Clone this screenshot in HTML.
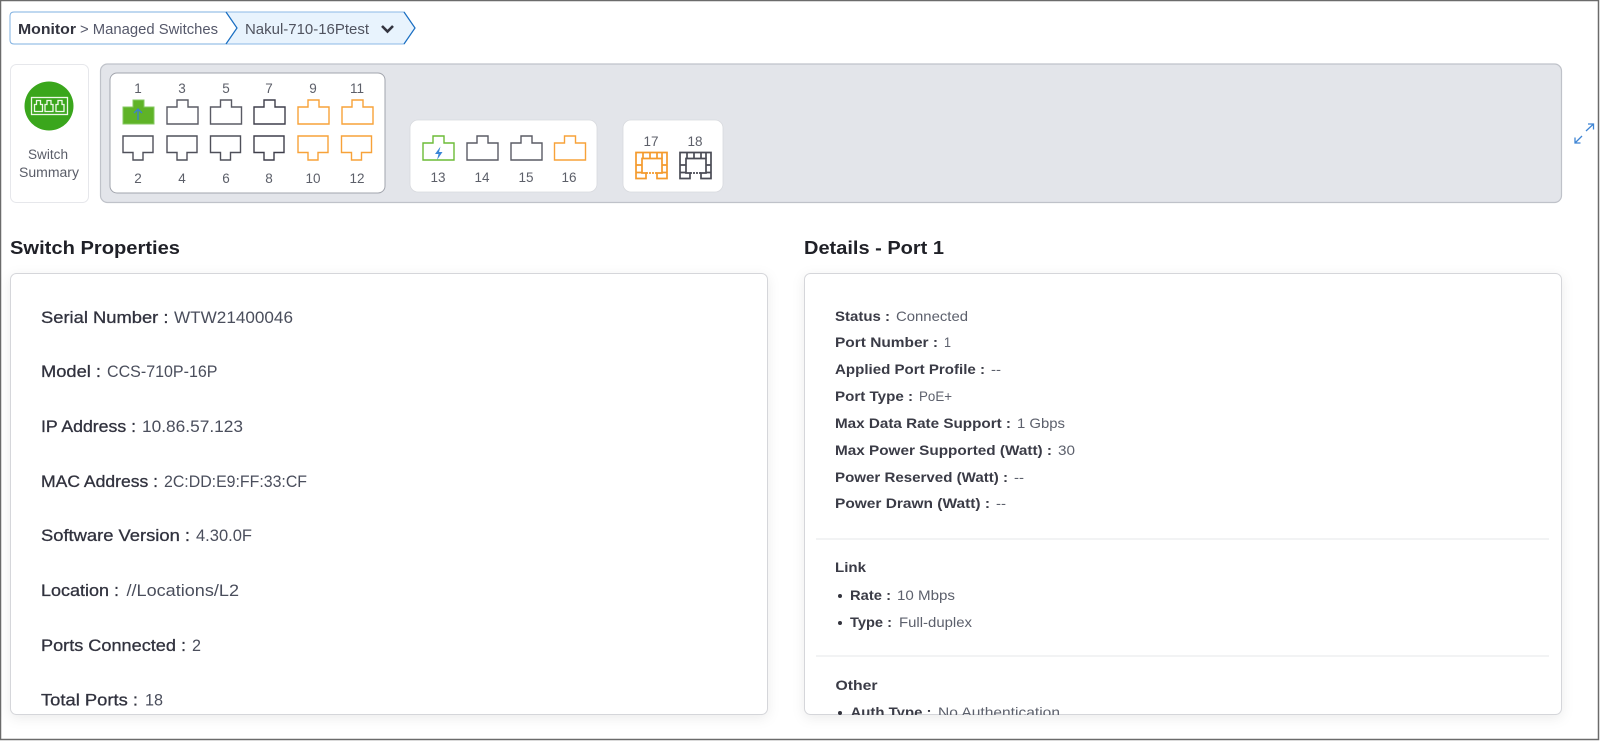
<!DOCTYPE html>
<html><head><meta charset="utf-8"><title>Managed Switches</title>
<style>
html,body{margin:0;padding:0;background:#fff;width:1600px;height:741px;overflow:hidden}
svg{display:block}
text{font-family:"Liberation Sans",sans-serif}
.l{font-size:17px;fill:#31323e;stroke:#31323e;stroke-width:.3px}
.v{font-size:17px;fill:#4a4e5c}
.b{font-size:14px;font-weight:bold;fill:#3a3b46}
.s{font-size:14px;fill:#5c606c}
.h{font-size:18px;font-weight:bold;fill:#1f2027}
.n{font-size:13.5px;fill:#5c5f69;text-anchor:middle}
.p{fill:none;stroke-width:1.4}
</style></head><body>
<svg width="1600" height="741" viewBox="0 0 1600 741" xmlns="http://www.w3.org/2000/svg">
<defs>
<path id="up" d="M123 124V107H133V100H144V107H154V124Z"/>
<path id="dn" d="M123 136H153V152.500H143V160H133V152.500H123Z"/>
<g id="sfp" fill="none" stroke-width="1.700">
<path d="M636 152.500H667V178.500H657V173H662V158.500H642V173H646V178.500H636Z"/>
<path d="M643 152.500V158.500M650 152.500V158.500M657 152.500V158.500M662 152.500V158.500M636 165H642M636 172.500H642M662 165H667M662 172.500H667"/>
<path d="M646 173H657" stroke-dasharray="2 1"/>
</g>
<clipPath id="cr"><rect x="804" y="274" width="758" height="441"/></clipPath>
</defs>

<rect width="1600" height="741" fill="#fff"/>
<path d="M.5 740V.5H1598.500V739.500H0" fill="none" stroke="#6b6b6b" stroke-width="1.500"/>

<!-- breadcrumb -->
<path d="M226 12H14Q10 12 10 16V40Q10 44 14 44H226L237 28Z" fill="#fff" stroke="#7fb0e0"/>
<path d="M226 12H404L415 28L404 44H226L237 28Z" fill="#e8f3fd" stroke="#8db9e6"/>
<path d="M226 12L237 28L226 44M404 12L415 28L404 44" fill="none" stroke="#1b6fc2" stroke-width="1.200"/>
<text x="18" y="34" font-size="15" font-weight="bold" fill="#33343f" textLength="58" lengthAdjust="spacingAndGlyphs">Monitor</text>
<text x="80" y="34" font-size="15" fill="#55586a" textLength="138" lengthAdjust="spacingAndGlyphs">&gt; Managed Switches</text>
<text x="245" y="34" font-size="15" fill="#50535f" textLength="124" lengthAdjust="spacingAndGlyphs">Nakul-710-16Ptest</text>
<path d="M382 26L387.500 31.500L393 26" fill="none" stroke="#33343f" stroke-width="2.600"/>

<!-- summary -->
<rect x="10.500" y="64.500" width="78" height="138" rx="6" fill="#fff" stroke="#e6e7eb" stroke-width="1"/>
<circle cx="49" cy="106" r="24.500" fill="#3aa61c"/>
<rect x="31.500" y="97.500" width="36" height="17" fill="none" stroke="#eef8e8" stroke-width="1.300"/>
<g fill="none" stroke="#eef8e8" stroke-width="1.300"><path d="M34.500 111.500V104.500H36.500V100.500H40.500V104.500H42.500V111.500Z"/><path d="M45 111.500V104.500H47V100.500H51V104.500H53V111.500Z"/><path d="M56 111.500V104.500H58V100.500H62V104.500H64V111.500Z"/></g>
<text x="28" y="159" font-size="13.500" fill="#5a5d68" textLength="40" lengthAdjust="spacingAndGlyphs">Switch</text>
<text x="19" y="177" font-size="13.500" fill="#5a5d68" textLength="60" lengthAdjust="spacingAndGlyphs">Summary</text>

<!-- gray panel -->
<rect x="100.500" y="64" width="1461" height="138.500" rx="7" fill="#e3e5ea" stroke="#bfc2c9" stroke-width="1.200"/>
<rect x="110" y="73" width="275" height="120" rx="7" fill="#fff" stroke="#a2a5ad" stroke-width="1"/>
<rect x="410" y="120" width="187" height="72" rx="8" fill="#fff" stroke="#d8dade" stroke-width=".8"/>
<rect x="623" y="120" width="100" height="72" rx="8" fill="#fff" stroke="#d8dade" stroke-width=".8"/>

<!-- labels -->
<text class="n" x="138" y="93">1</text><text class="n" x="182" y="93">3</text><text class="n" x="226" y="93">5</text><text class="n" x="269" y="93">7</text><text class="n" x="313" y="93">9</text><text class="n" x="357" y="93">11</text>
<text class="n" x="138" y="183">2</text><text class="n" x="182" y="183">4</text><text class="n" x="226" y="183">6</text><text class="n" x="269" y="183">8</text><text class="n" x="313" y="183">10</text><text class="n" x="357" y="183">12</text>
<text class="n" x="438" y="182">13</text><text class="n" x="482" y="182">14</text><text class="n" x="526" y="182">15</text><text class="n" x="569" y="182">16</text>
<text class="n" x="651" y="146">17</text><text class="n" x="695" y="146">18</text>

<!-- group 1 ports -->
<use href="#up" fill="#5fb327" stroke="#86c860" stroke-width="1"/>
<path d="M138 120V109M134 113L138 109L142 113" fill="none" stroke="#3b7fd0" stroke-width="1.300"/>
<g class="p" stroke="#5a5b65"><use href="#up" x="44"/><use href="#up" x="87.500"/></g>
<use href="#up" x="131" class="p" stroke="#3f3f4b"/>
<g class="p" stroke="#f7a239"><use href="#up" x="175"/><use href="#up" x="219"/></g>
<g class="p" stroke="#4f505a"><use href="#dn"/><use href="#dn" x="44"/><use href="#dn" x="87.500"/></g>
<use href="#dn" x="131" class="p" stroke="#3f3f4b"/>
<g class="p" stroke="#f7a239"><use href="#dn" x="175"/><use href="#dn" x="218.500"/></g>

<!-- group 2 ports -->
<use href="#up" x="300" y="36" class="p" stroke="#6cbb37"/>
<path d="M440.500 146.500L435 154H438.500L437 160L442.500 152H439Z" fill="#3b86d6"/>
<g class="p" stroke="#5a5b65"><use href="#up" x="344" y="36"/><use href="#up" x="388" y="36"/></g>
<use href="#up" x="431.500" y="36" class="p" stroke="#f7a239"/>

<!-- group 3 ports -->
<use href="#sfp" stroke="#f49a2c"/>
<use href="#sfp" x="44" stroke="#4a4b55"/>

<!-- expand -->
<path d="M1575 143L1582 136M1575 137.500V143H1580.500" fill="none" stroke="#3f85d4" stroke-width="1.300"/>
<path d="M1586 131L1593.500 124M1588 124H1593.500V129.500" fill="none" stroke="#3f85d4" stroke-width="1.300"/>

<!-- headings -->
<text class="h" x="10" y="254" textLength="170" lengthAdjust="spacingAndGlyphs">Switch Properties</text>
<text class="h" x="804" y="254" textLength="140" lengthAdjust="spacingAndGlyphs">Details - Port 1</text>

<!-- panels -->
<rect x="10.500" y="273.500" width="757" height="441" rx="6" fill="#fff" stroke="#d5d6da" stroke-width="1" style="filter:drop-shadow(0 3px 6px rgba(0,0,0,.08))"/>
<rect x="804.500" y="273.500" width="757" height="441" rx="6" fill="#fff" stroke="#d5d6da" stroke-width="1" style="filter:drop-shadow(0 3px 6px rgba(0,0,0,.08))"/>

<!-- left list -->
<text class="l" x="41" y="323" textLength="127.500" lengthAdjust="spacingAndGlyphs">Serial Number :</text><text class="v" x="174" y="323" textLength="119" lengthAdjust="spacingAndGlyphs">WTW21400046</text>
<text class="l" x="41" y="377" textLength="60" lengthAdjust="spacingAndGlyphs">Model :</text><text class="v" x="107" y="377" textLength="110.500" lengthAdjust="spacingAndGlyphs">CCS-710P-16P</text>
<text class="l" x="41" y="432" textLength="95" lengthAdjust="spacingAndGlyphs">IP Address :</text><text class="v" x="142" y="432" textLength="101" lengthAdjust="spacingAndGlyphs">10.86.57.123</text>
<text class="l" x="41" y="487" textLength="117" lengthAdjust="spacingAndGlyphs">MAC Address :</text><text class="v" x="164" y="487" textLength="143" lengthAdjust="spacingAndGlyphs">2C:DD:E9:FF:33:CF</text>
<text class="l" x="41" y="541" textLength="149" lengthAdjust="spacingAndGlyphs">Software Version :</text><text class="v" x="196" y="541" textLength="56" lengthAdjust="spacingAndGlyphs">4.30.0F</text>
<text class="l" x="41" y="596" textLength="78" lengthAdjust="spacingAndGlyphs">Location :</text><text class="v" x="126.500" y="596" textLength="112.500" lengthAdjust="spacingAndGlyphs">//Locations/L2</text>
<text class="l" x="41" y="651" textLength="145" lengthAdjust="spacingAndGlyphs">Ports Connected :</text><text class="v" x="192" y="651" textLength="9" lengthAdjust="spacingAndGlyphs">2</text>
<text class="l" x="41" y="705.500" textLength="97" lengthAdjust="spacingAndGlyphs">Total Ports :</text><text class="v" x="145" y="705.500" textLength="18" lengthAdjust="spacingAndGlyphs">18</text>

<!-- right list -->
<g clip-path="url(#cr)">
<text class="b" x="835" y="321" textLength="55" lengthAdjust="spacingAndGlyphs">Status :</text><text class="s" x="896" y="321" textLength="72" lengthAdjust="spacingAndGlyphs">Connected</text>
<text class="b" x="835" y="347" textLength="103" lengthAdjust="spacingAndGlyphs">Port Number :</text><text class="s" x="944" y="347" textLength="7" lengthAdjust="spacingAndGlyphs">1</text>
<text class="b" x="835" y="374" textLength="150" lengthAdjust="spacingAndGlyphs">Applied Port Profile :</text><text class="s" x="991" y="374" textLength="10" lengthAdjust="spacingAndGlyphs">--</text>
<text class="b" x="835" y="401" textLength="78" lengthAdjust="spacingAndGlyphs">Port Type :</text><text class="s" x="919" y="401" textLength="33" lengthAdjust="spacingAndGlyphs">PoE+</text>
<text class="b" x="835" y="428" textLength="176" lengthAdjust="spacingAndGlyphs">Max Data Rate Support :</text><text class="s" x="1017" y="428" textLength="48" lengthAdjust="spacingAndGlyphs">1 Gbps</text>
<text class="b" x="835" y="455" textLength="217" lengthAdjust="spacingAndGlyphs">Max Power Supported (Watt) :</text><text class="s" x="1058" y="455" textLength="17" lengthAdjust="spacingAndGlyphs">30</text>
<text class="b" x="835" y="482" textLength="173" lengthAdjust="spacingAndGlyphs">Power Reserved (Watt) :</text><text class="s" x="1014" y="482" textLength="10" lengthAdjust="spacingAndGlyphs">--</text>
<text class="b" x="835" y="508" textLength="155" lengthAdjust="spacingAndGlyphs">Power Drawn (Watt) :</text><text class="s" x="996" y="508" textLength="10" lengthAdjust="spacingAndGlyphs">--</text>
<rect x="816" y="538.500" width="733" height="1" fill="#e6e7ea"/>
<text class="b" x="835" y="572" textLength="31" lengthAdjust="spacingAndGlyphs">Link</text>
<circle cx="840" cy="596" r="2" fill="#33343e"/>
<text class="b" x="850" y="600" textLength="41" lengthAdjust="spacingAndGlyphs">Rate :</text><text class="s" x="897" y="600" textLength="58" lengthAdjust="spacingAndGlyphs">10 Mbps</text>
<circle cx="840" cy="623" r="2" fill="#33343e"/>
<text class="b" x="850" y="627" textLength="42" lengthAdjust="spacingAndGlyphs">Type :</text><text class="s" x="899" y="627" textLength="73" lengthAdjust="spacingAndGlyphs">Full-duplex</text>
<rect x="816" y="655.500" width="733" height="1" fill="#e6e7ea"/>
<text class="b" x="835.500" y="690" textLength="42" lengthAdjust="spacingAndGlyphs">Other</text>
<circle cx="840" cy="713" r="2" fill="#33343e"/>
<text class="b" x="850.500" y="717" textLength="81" lengthAdjust="spacingAndGlyphs">Auth Type :</text><text class="s" x="938" y="717" textLength="122" lengthAdjust="spacingAndGlyphs">No Authentication</text>
</g>
</svg>
</body></html>
